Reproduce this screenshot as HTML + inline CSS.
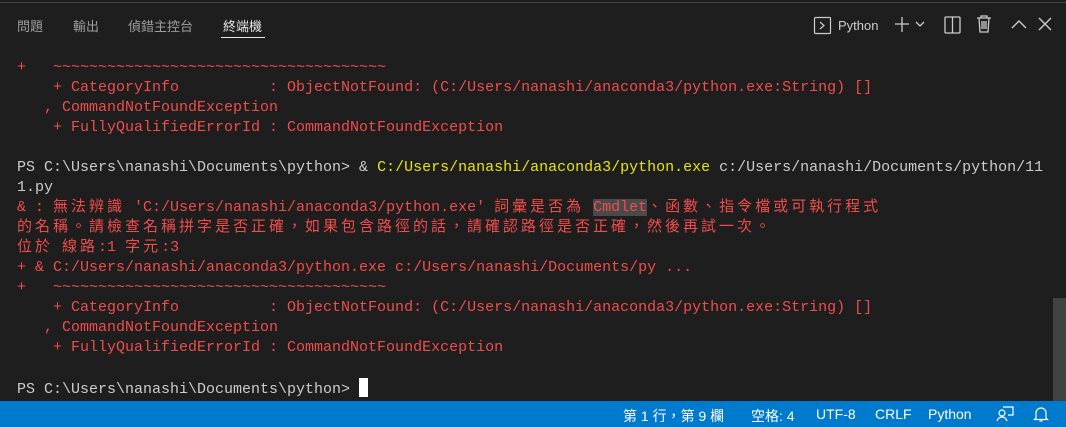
<!DOCTYPE html>
<html><head><meta charset="utf-8"><style>
*{margin:0;padding:0;box-sizing:border-box}
body{width:1066px;height:427px;background:#1e1e1e;overflow:hidden;position:relative;font-family:"Liberation Sans","Noto Sans CJK TC",sans-serif}
.topline{position:absolute;left:0;top:0;width:1066px;height:3px;border-top:1px solid #1e1e1e;border-bottom:1px solid #444}
.tab{position:absolute;top:16px;font-size:13px;color:#9d9d9d}
.tab.a{color:#e7e7e7}
.ul{position:absolute;left:221px;top:37px;width:44px;height:1px;background:#e7e7e7}
.term{position:absolute;left:17px;top:58px;font-family:"Liberation Mono","Noto Sans CJK TC",monospace;font-size:15px;color:#cccccc}
.l{height:20px;line-height:20px;white-space:pre}
.r{color:#f14c4c}
.y{color:#e5e510}
.c{letter-spacing:3px}
.hl{background:#4a4a4a}
.cur{display:inline-block;width:9px;height:19px;background:#fff;vertical-align:-4px}
.sb{position:absolute;right:0;top:298px;width:13px;height:103px;background:#424242}
.status{position:absolute;left:0;top:401px;width:1066px;height:26px;background:#007acc;color:#fff;font-size:14px}
.status span{position:absolute;top:5px}
.ic{position:absolute}
</style></head><body>
<div class="topline"></div>
<div class="tab" style="left:17px">問題</div>
<div class="tab" style="left:73px">輸出</div>
<div class="tab" style="left:128px">偵錯主控台</div>
<div class="tab a" style="left:223px">終端機</div>
<div class="ul"></div>

<svg class="ic" style="left:813px;top:16px" width="20" height="20" viewBox="0 0 20 20" fill="none" stroke="#ccc" stroke-width="1.2"><rect x="1.5" y="1.5" width="16" height="16" rx="1"/><path d="M7 6l4 3.5L7 13"/></svg>
<div style="position:absolute;left:838px;top:18px;color:#ccc;font-size:13px">Python</div>
<svg class="ic" style="left:893px;top:16px" width="40" height="20" viewBox="0 0 40 20" fill="none" stroke="#ccc" stroke-width="1.3"><path d="M2 8h14M9 1v15"/><path d="M23 6l4 4 4-4"/></svg>
<svg class="ic" style="left:943px;top:15px" width="20" height="20" viewBox="0 0 20 20" fill="none" stroke="#ccc" stroke-width="1.3"><rect x="2" y="2" width="15" height="16" rx="1"/><path d="M9.5 2v16"/></svg>
<svg class="ic" style="left:974px;top:14px" width="20" height="20" viewBox="0 0 20 20" fill="none" stroke="#ccc" stroke-width="1.3"><path d="M3 4h14M7 4V2h6v2M5 4l1 14h8l1-14M8 7v8M10 7v8M12 7v8"/></svg>
<svg class="ic" style="left:1009px;top:15px" width="20" height="20" viewBox="0 0 20 20" fill="none" stroke="#ccc" stroke-width="1.4"><path d="M3 13l7-7 7 7"/></svg>
<svg class="ic" style="left:1035px;top:14px" width="20" height="20" viewBox="0 0 20 20" fill="none" stroke="#ccc" stroke-width="1.4"><path d="M4 4l12 12M16 4L4 16"/></svg>

<div class="term">
<div class="l r">+   ~~~~~~~~~~~~~~~~~~~~~~~~~~~~~~~~~~~~~</div>
<div class="l r">    + CategoryInfo          : ObjectNotFound: (C:/Users/nanashi/anaconda3/python.exe:String) []</div>
<div class="l r">   , CommandNotFoundException</div>
<div class="l r">    + FullyQualifiedErrorId : CommandNotFoundException</div>
<div class="l"> </div>
<div class="l">PS C:\Users\nanashi\Documents\python&gt; &amp; <span class="y">C:/Users/nanashi/anaconda3/python.exe</span> c:/Users/nanashi/Documents/python/11</div>
<div class="l">1.py</div>
<div class="l r">&amp; : <span class="c">無法辨識</span> 'C:/Users/nanashi/anaconda3/python.exe' <span class="c">詞彙是否為</span> <span class="hl">Cmdlet</span><span class="c">、函數、指令檔或可執行程式</span></div>
<div class="l r"><span class="c">的名稱。請檢查名稱拼字是否正確，如果包含路徑的話，請確認路徑是否正確，然後再試一次。</span></div>
<div class="l r"><span class="c">位於</span> <span class="c">線路</span>:1 <span class="c">字元</span>:3</div>
<div class="l r">+ &amp; C:/Users/nanashi/anaconda3/python.exe c:/Users/nanashi/Documents/py ...</div>
<div class="l r">+   ~~~~~~~~~~~~~~~~~~~~~~~~~~~~~~~~~~~~~</div>
<div class="l r">    + CategoryInfo          : ObjectNotFound: (C:/Users/nanashi/anaconda3/python.exe:String) []</div>
<div class="l r">   , CommandNotFoundException</div>
<div class="l r">    + FullyQualifiedErrorId : CommandNotFoundException</div>
<div class="l"> </div>
<div class="l">PS C:\Users\nanashi\Documents\python&gt; <span class="cur"></span></div>
</div>
<div class="sb"></div>

<div class="status">
<span style="left:623px">第 1 行，第 9 欄</span>
<span style="left:751px">空格: 4</span>
<span style="left:816px">UTF-8</span>
<span style="left:875px">CRLF</span>
<span style="left:928px">Python</span>
<svg class="ic" style="left:995px;top:4px" width="20" height="18" viewBox="0 0 20 18" fill="none" stroke="#fff" stroke-width="1.2"><path d="M8 2h10v8h-5"/><circle cx="7" cy="8" r="3"/><path d="M2 16c1-3 3-4 5-4s4 1 5 4"/></svg>
<svg class="ic" style="left:1032px;top:4px" width="18" height="18" viewBox="0 0 18 18" fill="none" stroke="#fff" stroke-width="1.2"><path d="M4 13V8a5 5 0 0110 0v5l1.5 1.5h-13z"/><path d="M7.5 16h3"/></svg>
</div>
</body></html>
